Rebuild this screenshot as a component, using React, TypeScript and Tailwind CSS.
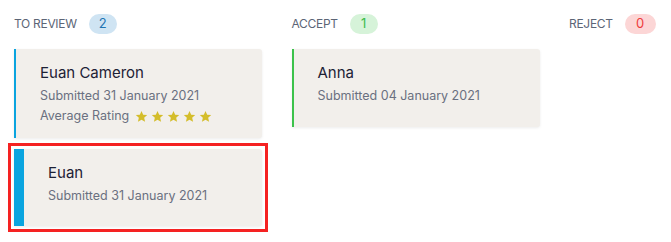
import React from "react";

type Card = {
  name: string;
  submitted: string;
  rating?: number;
  dragging?: boolean;
};

type Column = {
  title: string;
  badge: string;
  border: string;
  cards: Card[];
};

const COLUMNS: Column[] = [
  {
    title: "To Review",
    badge: "w-[28px] bg-[#cfe4f3] text-[#1f74b3]",
    border: "border-[#0aa4df]",
    cards: [
      { name: "Euan Cameron", submitted: "Submitted 31 January 2021", rating: 5 },
      { name: "Euan", submitted: "Submitted 31 January 2021", dragging: true },
    ],
  },
  {
    title: "Accept",
    badge: "w-[28px] bg-[#d6f3d9] text-[#3dbb4b]",
    border: "border-[#3cc24b]",
    cards: [{ name: "Anna", submitted: "Submitted 04 January 2021" }],
  },
  {
    title: "Reject",
    badge: "w-[31px] bg-[#fcd6d6] text-[#ee3b3b]",
    border: "border-[#ee3b3b]",
    cards: [],
  },
];

const counts = ["2", "1", "0"];

function Star() {
  return (
    <svg viewBox="0 0 24 24" className="h-[13px] w-[13px] fill-[#d4bd2b]">
      <path d="M12 1.8l3.1 6.9 7.4.7-5.6 5 1.7 7.4L12 17.9l-6.6 3.9 1.7-7.4-5.6-5 7.4-.7z" />
    </svg>
  );
}

function KanbanCard({ card, border }: { card: Card; border: string }) {
  const base = card.dragging
    ? `border-l-[10px] pl-[24px] pt-[13px] pb-[20px]`
    : card.rating
      ? `border-l-2 pl-[24px] pt-[13px] pb-[12px]`
      : `border-l-2 pl-[24px] pt-[13px] pb-[21px]`;

  const body = (
    <div
      className={`${base} ${border} rounded-r-[3px] bg-[#f2efeb] shadow-[0_1px_3px_rgba(0,0,0,0.08)]`}
    >
      <p className="text-[15px] leading-[22px] text-[#1d2135]">{card.name}</p>
      <p className="mt-[2px] text-[12.5px] leading-[20px] text-[#6a7080]">{card.submitted}</p>
      {card.rating != null && (
        <div className="flex items-center gap-[6px] text-[12.5px] leading-[20px] text-[#6a7080]">
          <span>Average Rating</span>
          <span className="flex items-center gap-[3px]">
            {Array.from({ length: card.rating }).map((_, i) => (
              <Star key={i} />
            ))}
          </span>
        </div>
      )}
    </div>
  );

  if (card.dragging) {
    return (
      <div className="mt-[11px] outline-[3px] outline-solid outline-[#f52222] outline-offset-[3px]">
        {body}
      </div>
    );
  }
  return body;
}

export default function App() {
  return (
    <div
      className="h-[242px] w-[671px] overflow-hidden bg-white"
      style={{ fontFamily: "Inter, 'Noto Sans', sans-serif" }}
    >
      <div className="flex gap-[29.5px] px-[14px] pt-[14px]">
        {COLUMNS.map((col, i) => (
          <div key={col.title} className="w-[248px] shrink-0">
            <div className="mb-[15px] flex h-[20px] items-center gap-[12px]">
              <span className="text-[12px] uppercase tracking-[-0.3px] text-[#5c6576]">
                {col.title}
              </span>
              <span
                className={`flex h-[20px] items-center justify-center rounded-full text-[13px] ${col.badge}`}
              >
                {counts[i]}
              </span>
            </div>
            <div className="flex flex-col">
              {col.cards.map((card) => (
                <KanbanCard key={card.name} card={card} border={col.border} />
              ))}
            </div>
          </div>
        ))}
      </div>
    </div>
  );
}
